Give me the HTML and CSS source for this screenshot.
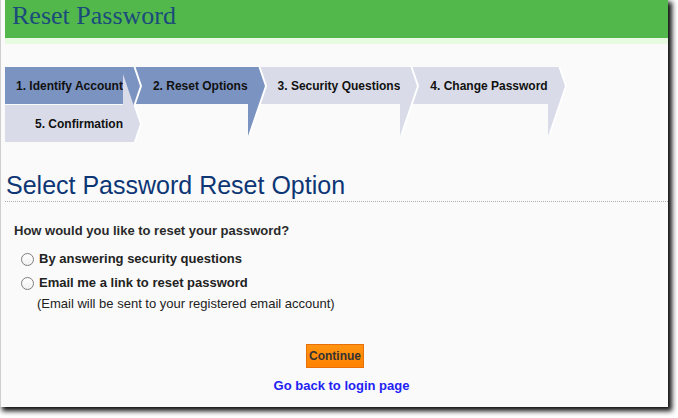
FILE: index.html
```html
<!DOCTYPE html>
<html lang="en">
<head>
<meta charset="utf-8">
<title>Reset Password</title>
<link rel="stylesheet" href="styles.css">
</head>
<body>
<div class="window">
  <header class="banner">Reset Password</header>
  <div class="banner-strip"></div>

  <ul class="steps">
    <li class="step step-done">1. Identify Account</li>
    <li class="step step-done">2. Reset Options</li>
    <li class="step step-todo">3. Security Questions</li>
    <li class="step step-todo">4. Change Password</li>
    <li class="step step-todo">5. Confirmation</li>
  </ul>

  <h1 class="page-title">Select Password Reset Option</h1>

  <form class="reset-form">
    <p class="question">How would you like to reset your password?</p>
    <label class="option"><input type="radio" name="method" class="radio"> By answering security questions</label>
    <label class="option"><input type="radio" name="method" class="radio"> Email me a link to reset password</label>
    <p class="note">(Email will be sent to your registered email account)</p>
    <div class="actions">
      <button type="button" class="btn-continue">Continue</button>
      <a href="#" class="back-link">Go back to login page</a>
    </div>
  </form>
</div>
</body>
</html>
```
FILE: styles.css
```css
html, body {
  margin: 0;
  padding: 0;
  background: #ffffff;
}

body {
  min-height: 418px;
}

.window {
  width: 663px;
  height: 407px;
  padding-left: 4px;
  border-left: 1px solid #cfcfcf;
  background: #fafafa;
  box-shadow: 3px 3px 5px 1px rgba(0, 0, 0, 0.95);
  overflow: hidden;
  font-family: "Liberation Sans", Arial, Helvetica, sans-serif;
  color: #222;
}

.banner {
  height: 38px;
  line-height: 32px;
  padding-left: 7px;
  background: #52b84c;
  color: #1a4b7b;
  font-family: "Liberation Serif", "Times New Roman", serif;
  font-size: 26px;
}

.banner-strip {
  height: 6px;
  background: #e6fbe0;
}

.steps {
  list-style: none;
  margin: 23px 0 0 0;
  padding: 0;
  width: 600px;
  display: flex;
  flex-wrap: wrap;
  row-gap: 1px;
  overflow: hidden;
}

.step {
  position: relative;
  height: 37px;
  line-height: 38px;
  padding-left: 30px;
  font-size: 12px;
  font-weight: bold;
  color: #111;
  white-space: nowrap;
}

.step:first-child {
  padding-left: 11px;
}

.step-done { background: #7b93c1; }
.step-todo { background: #d9dce8; }

.step::before,
.step::after {
  content: "";
  position: absolute;
  top: 50%;
  left: 100%;
  margin-top: -50px;
  width: 0;
  height: 0;
  border-top: 50px solid transparent;
  border-bottom: 50px solid transparent;
  border-left: 17px solid transparent;
}

.step::before {
  margin-left: 2px;
  border-left-color: #ffffff;
  z-index: 1;
}

.step::after {
  z-index: 2;
}

.step-done::after { border-left-color: #7b93c1; }
.step-todo::after { border-left-color: #d9dce8; }

.page-title {
  margin: 28px 0 0 0;
  padding: 0 0 1px 1px;
  height: 30px;
  line-height: 30px;
  font-size: 25px;
  font-weight: normal;
  color: #0d3675;
  border-bottom: 1px dotted #b0b0b0;
}

.reset-form {
  margin: 0;
  padding: 0;
  font-size: 13px;
  line-height: 16px;
}

.question {
  margin: 21px 0 0 9px;
  font-weight: bold;
  color: #2a2a2a;
}

.option {
  display: flex;
  align-items: center;
  gap: 5px;
  margin: 8px 0 0 16px;
  height: 16px;
  font-weight: bold;
  color: #222;
}

.question + .option {
  margin-top: 12px;
}

.radio {
  appearance: none;
  -webkit-appearance: none;
  margin: 0;
  width: 13px;
  height: 13px;
  border: 1px solid #7d7d7d;
  border-radius: 50%;
  background: linear-gradient(#ffffff, #f1f1f1);
  box-sizing: border-box;
}

.note {
  margin: 5px 0 0 32px;
  color: #222;
}

.actions {
  display: flex;
  flex-direction: column;
  align-items: center;
  margin-top: 32px;
}

.btn-continue {
  height: 24px;
  padding: 0 2px;
  border: 1px solid #e8700a;
  background: linear-gradient(#ff9411, #ff8200);
  color: #333;
  font-family: "Liberation Sans", Arial, sans-serif;
  font-size: 12px;
  font-weight: bold;
  border-radius: 0;
  margin-left: -3px;
}

.back-link {
  margin-top: 10px;
  margin-left: 10px;
  font-size: 13px;
  line-height: 16px;
  font-weight: bold;
  color: #1f22f2;
  text-decoration: none;
}
```
